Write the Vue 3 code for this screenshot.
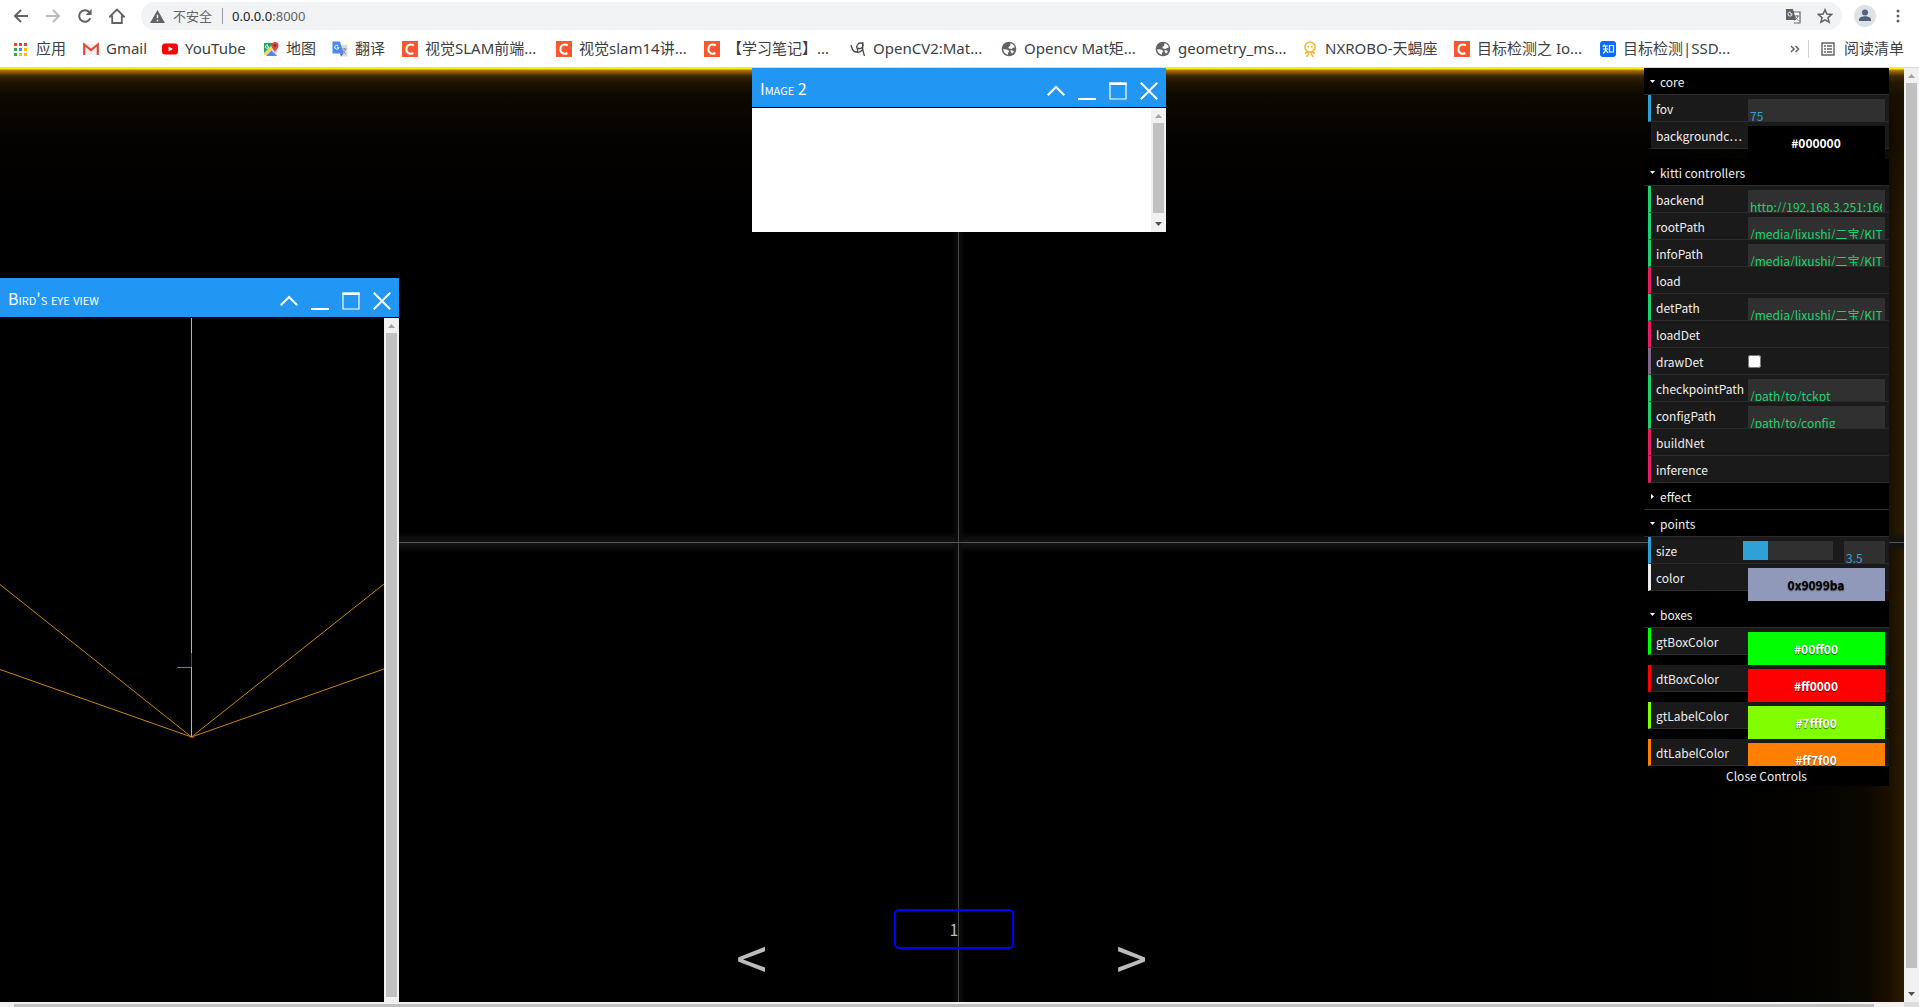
<script setup>
import { reactive } from 'vue'

const bookmarks = [
  { icon: 'apps', text: '应用', width: 70 },
  { icon: 'gmail', text: 'Gmail', width: 79 },
  { icon: 'youtube', text: 'YouTube', width: 101 },
  { icon: 'maps', text: '地图', width: 69 },
  { icon: 'translate', text: '翻译', width: 70 },
  { icon: 'csdn', text: '视觉SLAM前端...', width: 154 },
  { icon: 'csdn', text: '视觉slam14讲...', width: 148 },
  { icon: 'csdn', text: '【学习笔记】...', width: 146 },
  { icon: 'bird', text: 'OpenCV2:Mat...', width: 151 },
  { icon: 'globe', text: 'Opencv Mat矩...', width: 154 },
  { icon: 'globe', text: 'geometry_ms...', width: 147 },
  { icon: 'robot', text: 'NXROBO-天蝎座', width: 152 },
  { icon: 'csdn', text: '目标检测之 Io...', width: 146 },
  { icon: 'zhihu', text: '目标检测|SSD...', width: 146 },
]

const appDots = ['#ea4335', '#ea4335', '#ea4335', '#34a853', '#4285f4', '#fbbc04', '#34a853', '#fbbc04', '#fbbc04']

const folders = reactive([
  {
    name: 'core',
    open: true,
    rows: [
      { type: 'number', name: 'fov', value: '75' },
      { type: 'color', name: 'backgroundcolor', label: 'backgroundc⋯', value: '#000000', fill: '#000000', ink: '#ffffff' },
    ],
  },
  {
    name: 'kitti controllers',
    open: true,
    rows: [
      { type: 'string', name: 'backend', value: 'http://192.168.3.251:16666' },
      { type: 'string', name: 'rootPath', value: '/media/lixushi/二宝/KITTI' },
      { type: 'string', name: 'infoPath', value: '/media/lixushi/二宝/KITTI/info' },
      { type: 'function', name: 'load' },
      { type: 'string', name: 'detPath', value: '/media/lixushi/二宝/KITTI/det' },
      { type: 'function', name: 'loadDet' },
      { type: 'boolean', name: 'drawDet', value: false },
      { type: 'string', name: 'checkpointPath', value: '/path/to/tckpt' },
      { type: 'string', name: 'configPath', value: '/path/to/config' },
      { type: 'function', name: 'buildNet' },
      { type: 'function', name: 'inference' },
    ],
  },
  { name: 'effect', open: false, rows: [] },
  {
    name: 'points',
    open: true,
    rows: [
      { type: 'slider', name: 'size', value: '3.5' },
      { type: 'color', name: 'color', value: '0x9099ba', fill: '#9099ba', ink: '#000000', edge: '#eeeeee' },
    ],
  },
  {
    name: 'boxes',
    open: true,
    rows: [
      { type: 'color', name: 'gtBoxColor', value: '#00ff00', fill: '#00ff00', ink: '#ffffff' },
      { type: 'color', name: 'dtBoxColor', value: '#ff0000', fill: '#ff0000', ink: '#ffffff' },
      { type: 'color', name: 'gtLabelColor', value: '#7fff00', fill: '#7fff00', ink: '#ffffff' },
      { type: 'color', name: 'dtLabelColor', value: '#ff7f00', fill: '#ff7f00', ink: '#ffffff' },
    ],
  },
])

const panels = [
  { id: 'bev', title: "Bird's eye view" },
  { id: 'image', title: 'Image 2' },
]
</script>

<template>
  <div class="browser">
    <header class="chrome">
      <div class="toolbar">
        <button class="nav" aria-label="Back">
          <svg viewBox="0 0 16 16"><path d="M15 8H2M8 2L2 8l6 6" fill="none" stroke="#5f6368" stroke-width="2" /></svg>
        </button>
        <button class="nav" aria-label="Forward">
          <svg viewBox="0 0 16 16"><path d="M1 8h13M8 2l6 6-6 6" fill="none" stroke="#babcbe" stroke-width="2" /></svg>
        </button>
        <button class="nav" aria-label="Reload">
          <svg viewBox="0 0 16 16"><path d="M13.3 10.2A5.8 5.8 0 1 1 12.2 4" fill="none" stroke="#5f6368" stroke-width="2" /><path d="M14.6 1v6H8.6z" fill="#5f6368" /></svg>
        </button>
        <button class="nav" aria-label="Home">
          <svg viewBox="0 0 16 16"><path d="M1 8.5L8 1.5l7 7h-2.2V15H3.2V8.500z" fill="none" stroke="#5f6368" stroke-width="1.800" /></svg>
        </button>
        <div class="omnibox">
          <svg class="warn" viewBox="0 0 16 14"><path d="M8 0l8 14H0z" fill="#5f6368" /><path d="M8 5v4M8 10.500v1.700" stroke="#f1f3f4" stroke-width="1.600" /></svg>
          <span class="insecure">不安全</span>
          <span class="divider"></span>
          <span class="url"><b>0.0.0.0</b>:8000</span>
          <button class="mini" aria-label="Translate">
            <svg viewBox="0 0 16 16">
              <path d="M6 4h9v11H9" fill="#fff" stroke="#5f6368" stroke-width="1.200" />
              <path d="M1 1h7l3 11H1z" fill="#5f6368" />
              <path d="M7 5.800H5.200M7 5.800A2 2 0 1 1 6 4.400" fill="none" stroke="#f1f3f4" />
              <path d="M9.500 8h4.500M12 7v1M10 8.500c1 2 2 3 3.500 4M13 8c-.5 2-2 3.500-3.500 4.500" fill="none" stroke="#5f6368" stroke-width=".9" />
            </svg>
          </button>
          <button class="mini" aria-label="Bookmark this page">
            <svg viewBox="0 0 16 16"><path d="M8 1.800l1.900 4.300 4.700.4-3.600 3.100 1.100 4.600L8 11.800l-4.100 2.400L5 9.600 1.400 6.500l4.700-.4z" fill="none" stroke="#5f6368" stroke-width="1.500" /></svg>
          </button>
        </div>
        <button class="avatar" aria-label="Profile">
          <svg viewBox="0 0 22 22"><circle cx="11" cy="11" r="11" fill="#dee1e6" /><circle cx="11" cy="7.500" r="3" fill="#53607a" /><path d="M5 16v-1.500c0-2.300 3.500-3.300 6-3.300s6 1 6 3.300V16z" fill="#53607a" /></svg>
        </button>
        <button class="more" aria-label="Menu">
          <svg viewBox="0 0 4 14"><circle cx="2" cy="2" r="1.500" /><circle cx="2" cy="7" r="1.500" /><circle cx="2" cy="12" r="1.500" /></svg>
        </button>
      </div>

      <nav class="bookmarks">
        <a v-for="(b, i) in bookmarks" :key="i" href="#" class="bookmark" :style="{ width: b.width + 'px' }">
          <svg class="favicon" viewBox="0 0 16 16">
            <template v-if="b.icon === 'apps'">
              <rect v-for="(c, n) in appDots" :key="n" :x="1 + (n % 3) * 5" :y="2 + Math.floor(n / 3) * 5" width="3" height="3" :fill="c" />
            </template>
            <template v-else-if="b.icon === 'gmail'">
              <path d="M1 3h14v11H1z" fill="#eee" />
              <path d="M1.200 14V3.500L8 9l6.800-5.500V14" fill="none" stroke="#dd4b3e" stroke-width="2.200" />
            </template>
            <template v-else-if="b.icon === 'youtube'">
              <rect y="2.500" width="16" height="11" rx="3" fill="#f00" />
              <path d="M6.500 5.500v5L11 8z" fill="#fff" />
            </template>
            <template v-else-if="b.icon === 'maps'">
              <path d="M1 2h13v12H1z" fill="#1ea362" />
              <path d="M1 14L11 4l3 3v7z" fill="#d9dce0" />
              <path d="M1 12L9 4l2 2-8 8H1z" fill="#ffd84d" />
              <path d="M3 15l5.500-5.500L14 15z" fill="#4a89f3" />
              <path d="M12 12c0-3-3.500-4-3.500-7.500a3.500 3.500 0 0 1 7 0C15.500 8 12 9 12 12z" fill="#dd4b3e" />
              <circle cx="12" cy="4.500" r="1.200" fill="#822a23" />
              <path d="M5.800 5.600H4.200M5.800 5.600A1.700 1.700 0 1 1 5 4.200" fill="none" stroke="#fff" />
            </template>
            <template v-else-if="b.icon === 'translate'">
              <path d="M6 4h9.500v11.500H9z" fill="#d8dbe0" />
              <path d="M.5.500h7.500l3.500 12H.5z" fill="#4a89f3" />
              <path d="M9 15.500l2.500-3H8z" fill="#3367d6" />
              <path d="M6.800 6.200H5M6.800 6.200A2 2 0 1 1 6 4.600" fill="none" stroke="#fff" />
              <path d="M10 8h4.500M12.300 7v1M10.500 9c1 2 2 3 3.500 4M13.500 8c-.5 2-2 3.500-3 4" fill="none" stroke="#77808c" stroke-width=".9" />
            </template>
            <template v-else-if="b.icon === 'csdn'">
              <path d="M0 0h16v16H0z" fill="#fc5531" />
              <path d="M11.800 4.400C8.500 2.300 4.400 4 4.400 8.200c0 4 3.700 5.500 7 3.800" fill="none" stroke="#fff" stroke-width="2" />
            </template>
            <template v-else-if="b.icon === 'bird'">
              <path d="M1 4c1 4 3 7 5 7s2-2 1-4 1-5 3.500-5S14 4 12.500 6 9 8 8 7M13 1c-1 5 0 10 1.500 14M6 11c3 1 6-1 7-3" fill="none" stroke="#444" stroke-width="1.300" />
            </template>
            <template v-else-if="b.icon === 'globe'">
              <circle cx="8" cy="8" r="7.300" fill="#5f6368" />
              <path d="M2.200 8.300c1.800-.3 3.800 0 5.200 1 1.200.9.900 2-.4 2.500v2C4.200 13.400 2.200 11 2.200 8.300zM9.500 2.300c2.200.5 3.800 2 4.300 4-.9.900-2 .3-2.500 1.300-.8.900-2.300.3-3.500-.4-.9-.9 0-1.500 1-1.900.8-.6.300-1.900.7-3zM9.600 9.300c1.200-.4 2.600 0 3.300.9-.6 1.300-1.300 1.800-2 2.300-.6-.8-1.500-1.900-1.300-3.200z" fill="#fff" />
            </template>
            <template v-else-if="b.icon === 'robot'">
              <circle cx="8" cy="6" r="5" fill="none" stroke="#f9b934" stroke-width="1.700" />
              <circle cx="6.200" cy="5.800" r="1" fill="#f9b934" /><circle cx="9.800" cy="5.800" r="1" fill="#f9b934" />
              <path d="M6.500 10.500L3 12.500M9.500 10.500l3.500 2M6.500 11v2.500L4.500 16M9.500 11v2.500l2 2.500" fill="none" stroke="#f9b934" stroke-width="1.500" />
            </template>
            <template v-else>
              <rect width="16" height="16" rx="3" fill="#0a6cff" />
              <path d="M4.500 3.500L3 6M3.800 5h4M2.800 8h5.400M5.600 5v3c0 2-1 3.500-2.600 4.500M6 9l2 3M9.500 4.500h4v6.500h-4z" fill="none" stroke="#fff" stroke-width="1.200" />
            </template>
          </svg>
          <span>{{ b.text }}</span>
        </a>
        <button class="overflow" aria-label="More bookmarks">
          <svg viewBox="0 0 10 8"><path d="M1 1l3 3-3 3M5.500 1l3 3-3 3" fill="none" stroke="#5f6368" stroke-width="1.500" /></svg>
        </button>
        <button class="reading">
          <svg viewBox="0 0 14 14"><path d="M1 1h12v12H1z" fill="none" stroke="#5f6368" stroke-width="1.400" /><path d="M3 4h2M6 4h5M3 7h2M6 7h5M3 10h2M6 10h5" stroke="#5f6368" stroke-width="1.300" /></svg>
          <span>阅读清单</span>
        </button>
      </nav>
    </header>

    <div class="viewport">
      <main class="scene">
        <section v-for="p in panels" :key="p.id" class="panel" :class="p.id">
          <div class="panel-head">
            <h2>{{ p.title }}</h2>
            <button aria-label="Smallify"><svg viewBox="0 0 18 18"><path d="M.7 13.300L9 5l8.300 8.300" /></svg></button>
            <button aria-label="Minimize"><svg viewBox="0 0 18 18"><path d="M0 17h18" /></svg></button>
            <button aria-label="Maximize"><svg viewBox="0 0 18 18"><path d="M1 1h16v16H1z" stroke-width="1.200" /><path d="M.4 1.800h17.200" stroke-width="2.400" /></svg></button>
            <button aria-label="Close"><svg viewBox="0 0 18 18"><path d="M.8.800l16.400 16.400M17.200.8L.8 17.200" /></svg></button>
          </div>
          <div class="panel-body">
            <div class="panel-content">
              <svg v-if="p.id === 'bev'" class="bev-plot" viewBox="0 0 384 420">
                <g fill="none" stroke="#c88608" stroke-width="1">
                  <path d="M0 266.500L191.500 419 384 266" />
                  <path d="M0 351.500L191.500 419 384 351" />
                </g>
                <path d="M191.500 0v419" stroke="#b4b4b4" />
                <path d="M191.500 335v14" stroke="#b02800" />
                <path d="M177 349.500h14" stroke="#46a800" />
                <path d="M190 419.500h4" stroke="#a03000" />
              </svg>
            </div>
            <div class="bar">
              <i class="arrow up"></i>
              <div class="thumb"></div>
              <i v-if="p.id === 'image'" class="arrow down"></i>
            </div>
          </div>
        </section>

        <div class="pager">
          <button class="step">&lt;</button>
          <input class="frame" type="text" value="1" aria-label="Frame index" />
          <button class="step">&gt;</button>
        </div>

        <aside class="gui">
          <div class="gui-list">
            <section v-for="f in folders" :key="f.name">
              <button class="folder" @click="f.open = !f.open">
                <svg viewBox="0 0 5 5"><path :d="f.open ? 'M0 1h5L2.500 4z' : 'M1 0v5l3-2.500z'" fill="#fff" /></svg>{{ f.name }}
              </button>
              <template v-if="f.open">
                <div v-for="r in f.rows" :key="r.name" class="row" :class="r.type">
                  <div class="cell" :style="r.type === 'color' ? { borderLeftColor: r.edge || r.fill } : null">
                    <button v-if="r.type === 'function'" class="action">{{ r.name }}</button>
                    <template v-else>
                      <label :for="'c-' + r.name">{{ r.label || r.name }}</label>
                      <input v-if="r.type === 'boolean'" :id="'c-' + r.name" v-model="r.value" type="checkbox" />
                      <template v-else>
                        <div v-if="r.type === 'slider'" class="track"><div class="fill"></div></div>
                        <input
                          :id="'c-' + r.name"
                          v-model="r.value"
                          type="text"
                          class="field"
                          :style="r.type === 'color' ? { background: r.fill, color: r.ink } : null"
                        />
                      </template>
                    </template>
                  </div>
                </div>
              </template>
            </section>
          </div>
          <button class="close">Close Controls</button>
        </aside>
      </main>
      <div class="bar page-v">
        <i class="arrow up"></i>
        <div class="thumb"></div>
        <i class="arrow down"></i>
      </div>
      <div class="page-h"><div class="thumb"></div></div>
      <div class="corner"></div>
    </div>
  </div>
</template>

<style>
html,
body,
#app {
  height: 100%;
}
body {
  margin: 0;
  overflow: hidden;
}
</style>

<style scoped>
* {
  box-sizing: border-box;
}
button {
  padding: 0;
  border: 0;
  background: none;
  color: inherit;
  font: inherit;
}
svg {
  display: block;
}
.browser {
  display: flex;
  flex-direction: column;
  height: 100vh;
  overflow: hidden;
  background: #fff;
  font-family: "Noto Sans", "Noto Sans CJK SC", sans-serif;
  color: #3c4043;
}
.chrome {
  flex: none;
  height: 68px;
  border-bottom: 1px solid #d5d7dc;
}
.toolbar {
  display: flex;
  align-items: center;
  height: 32px;
  padding: 0 19px 0 13px;
}
.nav {
  width: 16px;
  margin-right: 16px;
}
.omnibox {
  display: flex;
  flex: 1;
  align-items: center;
  height: 28px;
  margin-right: 12px;
  padding: 0 9px;
  border-radius: 14px;
  background: #f1f3f4;
  font-size: 13px;
}
.warn {
  width: 15px;
  height: 13px;
}
.insecure {
  margin: 0 1px 2px 8px;
  color: #5f6368;
}
.divider {
  width: 1px;
  height: 16px;
  margin: 0 9px;
  background: #9aa0a6;
}
.url {
  flex: 1;
  color: #5f6368;
}
.url b {
  color: #202124;
  font-weight: 400;
}
.mini {
  width: 16px;
  margin-left: 16px;
}
.avatar {
  width: 22px;
  margin-right: 20px;
}
.more {
  width: 4px;
  fill: #5f6368;
}
.bookmarks {
  display: flex;
  align-items: center;
  height: 34px;
  padding: 0 15px 0 13px;
  font-size: 15px;
  line-height: 20px;
  white-space: nowrap;
}
.bookmark {
  display: flex;
  flex: none;
  gap: 7px;
  align-items: center;
  color: inherit;
  text-decoration: none;
}
.bookmark span,
.reading span {
  margin-bottom: 2px;
}
.favicon {
  flex: none;
  width: 16px;
  height: 16px;
}
.overflow {
  width: 10px;
  margin-left: auto;
}
.reading {
  display: flex;
  gap: 9px;
  align-items: center;
  height: 18px;
  margin-left: 8px;
  padding-left: 12px;
  border-left: 1px solid #d0d2d6;
}
.reading svg {
  width: 14px;
}
.viewport {
  display: grid;
  flex: 1;
  grid-template-rows: 1fr 5px;
  grid-template-columns: 1fr 15px;
  min-height: 0;
}
.scene {
  position: relative;
  overflow: hidden;
  font-family: "Noto Sans CJK SC", sans-serif;
  background:
    linear-gradient(#484848, #484848) calc(50% + 6px) 0 / 1px 100% no-repeat,
    linear-gradient(#585858, #585858) 0 calc(50% + 7px) / 100% 1px no-repeat,
    linear-gradient(90deg, transparent, #0c0c0c 40%, #0c0c0c 60%, transparent) calc(50% + 6px) 0 / 13px 100% no-repeat,
    linear-gradient(transparent, #121212 40%, #121212 60%, transparent) 0 calc(50% + 7px) / 100% 21px no-repeat,
    linear-gradient(#ffee00 1px, #b87800 2px, #7a4e00 5px, rgba(66, 42, 0, 0.9) 8px, rgba(40, 26, 0, 0.8) 14px, rgba(20, 13, 0, 0.7) 26px, rgba(8, 5, 0, 0.5) 70px, transparent 160px),
    linear-gradient(270deg, #2c1c00, #1a1000 15px, #0a0700 40px, #040300 90px, #000 220px);
  background-color: #000;
}
.panel {
  position: absolute;
  display: flex;
  flex-direction: column;
}
.panel.bev {
  top: 210px;
  bottom: 0;
  left: 0;
  width: 399px;
}
.panel.image {
  top: 0;
  left: calc(50% - 200px);
  width: 414px;
  height: 164px;
}
.panel-head {
  display: flex;
  gap: 13px;
  align-items: center;
  height: 39px;
  padding: 6px 8px 0;
  background: #2196f3;
  color: #fff;
}
.panel-head h2 {
  flex: 1;
  margin: 0 0 6px;
  font-size: 16px;
  font-variant: small-caps;
  font-weight: 400;
  line-height: 24px;
}
.panel-head button {
  width: 18px;
}
.panel-head svg {
  fill: none;
  stroke: #fff;
  stroke-width: 2px;
}
.panel-body {
  display: flex;
  flex: 1;
  min-height: 0;
  border-top: 1px solid #000;
}
.panel-content {
  flex: 1;
  overflow: hidden;
  background: #000;
}
.image .panel-content {
  background: #fff;
}
.bar {
  display: flex;
  flex: none;
  flex-direction: column;
  align-items: center;
  width: 15px;
  background: #f1f1f1;
}
.arrow {
  flex: none;
  width: 7px;
  height: 4px;
  margin: 6px 0 5px;
  background: #505050;
}
.arrow.up {
  background: #a3a3a3;
  clip-path: polygon(50% 0, 100% 100%, 0 100%);
}
.arrow.down {
  margin: 9px 0 6px;
  clip-path: polygon(0 0, 100% 0, 50% 100%);
}
.bar .thumb {
  flex: 1;
  width: 11px;
  background: #c1c1c1;
}
.bev .bar .thumb {
  margin-bottom: 5px;
}
.page-v .thumb {
  margin-bottom: 15px;
}
.page-h {
  padding: 2px 30px 0 14px;
  background: #f1f1f1;
}
.page-h .thumb {
  height: 3px;
  background: #c1c1c1;
}
.corner {
  background: #dcdcdc;
}
.pager {
  position: absolute;
  bottom: 13px;
  left: calc(50% - 216px);
  display: flex;
  justify-content: space-between;
  width: 410px;
  height: 80px;
  color: #bbb;
}
.step {
  align-self: flex-end;
  width: 30px;
  margin-bottom: 5px;
  font-size: 56px;
  line-height: 56px;
}
.frame {
  width: 120px;
  height: 40px;
  margin-left: 26px;
  border: 2px solid #00f;
  border-radius: 5px;
  background: transparent;
  color: #bbb;
  font-family: inherit;
  font-size: 16px;
  text-align: center;
}
.gui {
  position: absolute;
  top: 0;
  right: 15px;
  width: 245px;
  color: #eee;
  font-size: 12px;
  line-height: 26px;
}
.gui-list {
  height: 698px;
  overflow: hidden;
}
.folder {
  display: flex;
  align-items: center;
  width: 100%;
  height: 27px;
  padding: 2px 0 0 6px;
  border-bottom: 1px solid #2c2c2c;
  background: #000;
}
.folder svg {
  width: 5px;
  margin: 0 5px 2px 0;
}
.row {
  height: 27px;
  margin-left: 4px;
}
.row.color {
  height: 37px;
}
.cell {
  display: flex;
  height: 27px;
  padding-right: 4px;
  overflow: hidden;
  border-bottom: 1px solid #2c2c2c;
  border-left: 3px solid #1ed36f;
  background: #1a1a1a;
}
.number .cell,
.slider .cell {
  border-left-color: #2fa1d6;
}
.function .cell {
  border-left-color: #e61d5f;
}
.boolean .cell {
  border-left-color: #806787;
}
.color .cell {
  overflow: visible;
}
.cell label {
  flex: none;
  width: 92px;
  margin-right: 5px;
  padding: 1px 0 0 5px;
  white-space: nowrap;
}
.slider .cell label {
  margin-right: 0;
}
.action {
  flex: 1;
  padding: 1px 0 0 5px;
  text-align: left;
}
.field {
  flex: 1;
  min-width: 0;
  height: 33px;
  margin-top: 4px;
  padding: 0 3px 1px 2px;
  border: 0;
  background: #303030;
  color: #1ed36f;
  font-family: inherit;
  font-size: 12px;
}
.number .field,
.slider .field {
  color: #2fa1d6;
}
.color .field {
  font-weight: 700;
  text-align: center;
  text-shadow: 0 1px 1px rgba(0, 0, 0, 0.6);
}
.track {
  width: 90px;
  height: 19px;
  margin: 4px 11px 0 0;
  background: #303030;
}
.fill {
  width: 25px;
  height: 19px;
  background: #2fa1d6;
}
.cell input[type="checkbox"] {
  width: 13px;
  height: 13px;
  margin: 7px 0 0;
}
.close {
  display: block;
  width: 100%;
  height: 20px;
  background: #000;
  line-height: 20px;
}
</style>
